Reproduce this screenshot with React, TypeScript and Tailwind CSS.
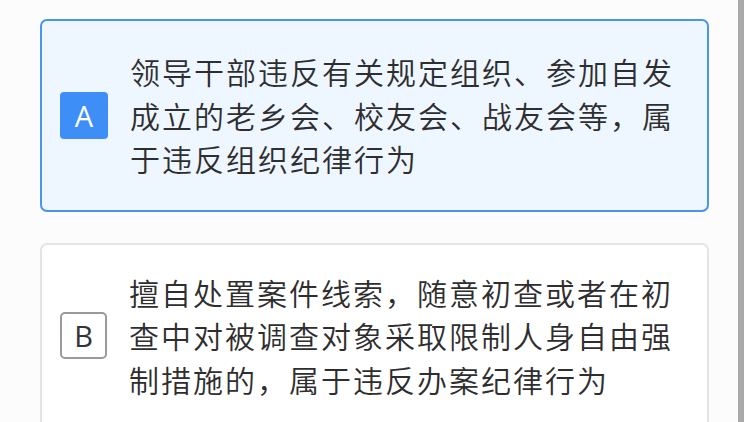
import React from "react";

const font = { fontFamily: '"Noto Sans CJK SC", "Noto Sans", sans-serif' };

function Option({
  letter,
  text,
  selected,
}: {
  letter: string;
  text: string;
  selected?: boolean;
}) {
  return (
    <div
      className={
        selected
          ? "flex items-center rounded-[7px] border-2 border-[#4a94ec] bg-[#eef6ff] pl-[18px] pr-[26px] py-[29px]"
          : "flex items-center rounded-[7px] border-2 border-[#e4e4e4] bg-white pl-[18px] pr-[26px] py-[26px]"
      }
    >
      <div
        className={
          selected
            ? "flex h-[47px] w-[48px] shrink-0 items-center justify-center rounded-[4px] bg-[#3e8ef7] text-[29px] font-normal text-white"
            : "flex h-[47px] w-[47px] shrink-0 items-center justify-center rounded-[5px] border-2 border-[#9a9a9a] bg-white text-[29px] font-normal text-[#333]"
        }
        style={{ fontFamily: '"Open Sans", "Liberation Sans", sans-serif' }}
      >
        {letter}
      </div>
      <div className="ml-[22px] flex-1 text-[30px] font-[350] leading-[43.5px] tracking-[2px] text-[#2e2e2e]">
        {text}
      </div>
    </div>
  );
}

export default function App() {
  return (
    <div className="flex h-[422px] w-[750px] overflow-hidden bg-[#fcfcfc]" style={font}>
      <div className="flex flex-1 flex-col gap-[31px] pl-[40px] pr-[29px] pt-[19px]">
        <Option
          letter="A"
          selected
          text="领导干部违反有关规定组织、参加自发成立的老乡会、校友会、战友会等，属于违反组织纪律行为"
        />
        <Option
          letter="B"
          text="擅自处置案件线索，随意初查或者在初查中对被调查对象采取限制人身自由强制措施的，属于违反办案纪律行为"
        />
      </div>
      <div className="h-full w-[6px] bg-[#a9a9a9]" />
      <div className="h-full w-[6px] bg-white" />
    </div>
  );
}
